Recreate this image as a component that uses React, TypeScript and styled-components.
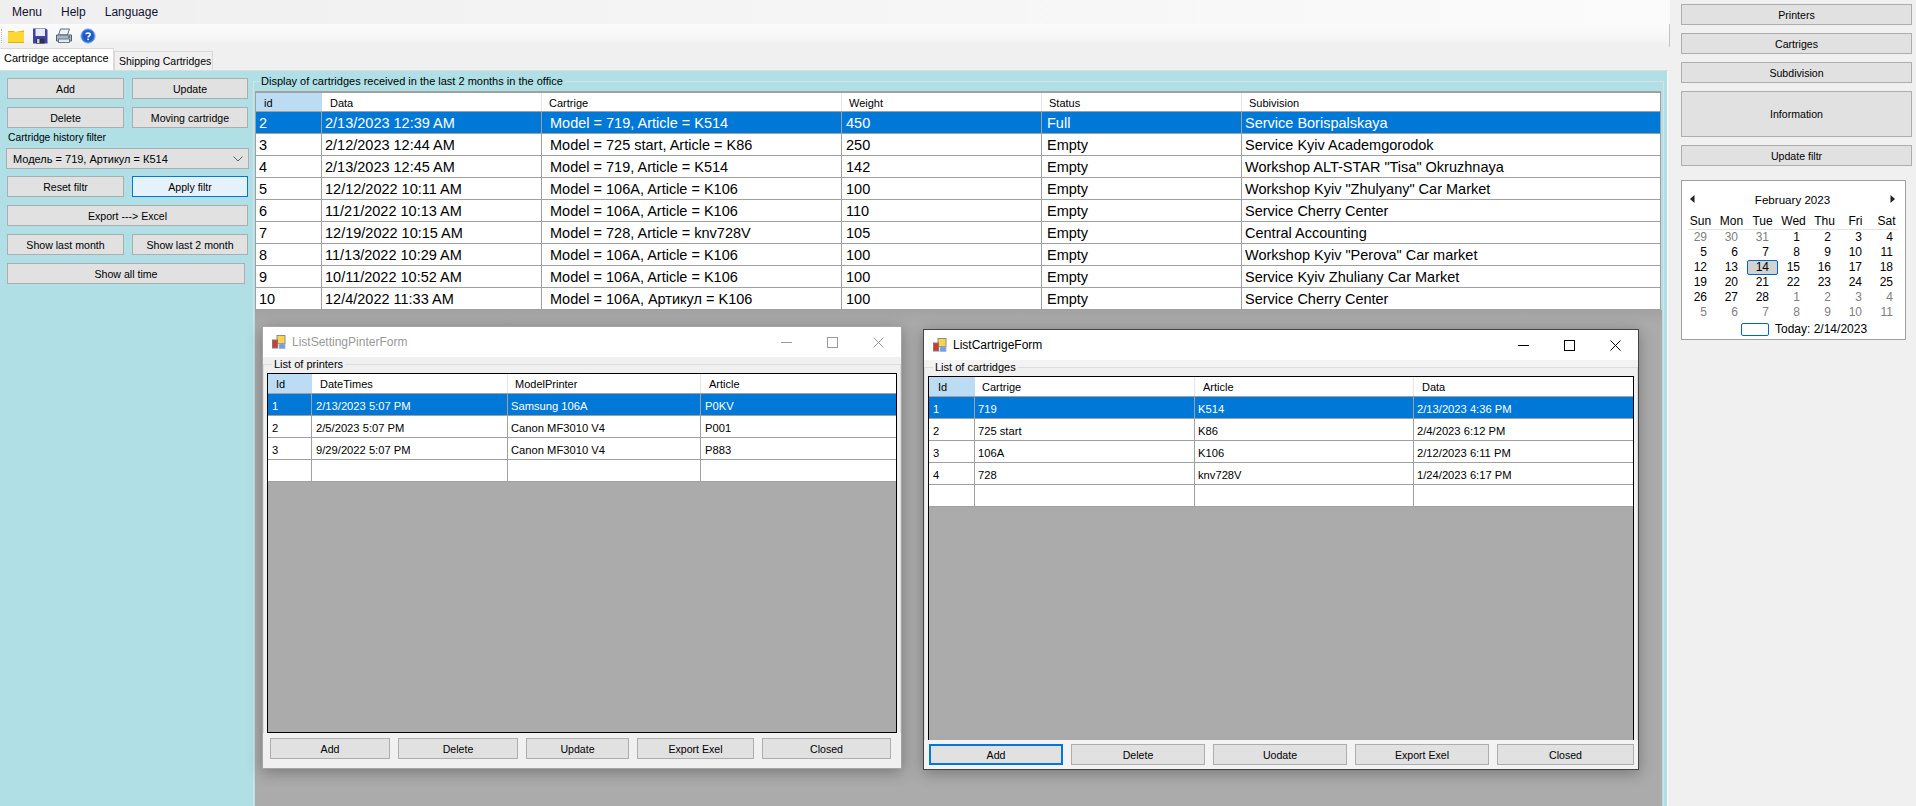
import React from "react";
import styled, { createGlobalStyle } from "styled-components";

const Global = createGlobalStyle`
  html, body { margin: 0; padding: 0; background: #f0f0f0; overflow: hidden; }
  body { font-family: "Liberation Sans", Arial, sans-serif; font-size: 11px; color: #000; }
  * { box-sizing: border-box; }
`;

const Page = styled.div`
  display: flex;
  width: 1916px;
  height: 806px;
  overflow: hidden;
`;
const Main = styled.div`
  width: 1670px;
  display: flex;
  flex-direction: column;
  flex: none;
`;
const MenuBar = styled.nav`
  height: 24px;
  display: flex;
  align-items: center;
  padding: 0 0 0 12px;
  gap: 19px;
  background: linear-gradient(90deg, #efefef 0%, #f5f5f5 50%, #fbfbfb 100%);
  font-size: 12px;
  span { color: #101030; }
`;
const ToolBar = styled.div`
  height: 23px;
  display: flex;
  align-items: center;
  padding-left: 7px;
  gap: 6px;
  background: linear-gradient(180deg, #fbfbfb 0%, #f9f9f9 40%, #efefef 100%);
  border-right: 1px solid #c4c4c4;
  position: relative;
  &::before {
    content: "";
    position: absolute;
    left: 1px;
    top: 5px;
    height: 14px;
    border-left: 1px dotted #b5b5b5;
  }
`;
const ToolIcon = styled.svg`
  width: 18px;
  height: 16px;
  flex: none;
`;
const TabStrip = styled.div`
  height: 24px;
  display: flex;
  align-items: flex-end;
  width: 1668px;
  background: #f0f0f0;
  border-bottom: 1px solid #dcdcdc;
`;
const Tab = styled.div<{ $active?: boolean }>`
  height: ${(p) => (p.$active ? 22 : 19)}px;
  padding: ${(p) => (p.$active ? "0 0 3px 4px" : "0 0 0 4px")};
  width: ${(p) => (p.$active ? 114 : 99)}px;
  display: flex;
  align-items: center;
  background: ${(p) => (p.$active ? "#fff" : "#f0f0f0")};
  border: 1px solid #d9d9d9;
  border-bottom: none;
  border-left: ${(p) => (p.$active ? "none" : "1px solid #d9d9d9")};
  font-size: ${(p) => (p.$active ? 11 : 10.5)}px;
  white-space: nowrap;
`;
const TabPanel = styled.div`
  flex: 1;
  min-height: 0;
  width: 1668px;
  background: #b0e0e6;
  border-right: 1px solid #fff;
  display: flex;
`;
const LeftPane = styled.div`
  width: 253px;
  flex: none;
  padding: 7px 0 0 7px;
  display: flex;
  flex-direction: column;
  gap: 8px;
`;
const Pair = styled.div`
  display: grid;
  grid-template-columns: 117px 116px;
  gap: 8px;
  width: 241px;
`;
const Btn = styled.button<{ $state?: "hot" | "focus" }>`
  height: 21px;
  margin: 0;
  padding: 0;
  font: 10.6px "Liberation Sans", Arial, sans-serif;
  color: #000;
  background: ${(p) => (p.$state === "hot" ? "#e5f1fb" : "#e1e1e1")};
  border: ${(p) => (p.$state === "focus" ? "2px solid #0078d7" : p.$state === "hot" ? "1px solid #0078d7" : "1px solid #adadad")};
`;
const WideBtn = styled(Btn)<{ $w: number }>`
  width: ${(p) => p.$w}px;
`;
const FilterBlock = styled.div`
  display: flex;
  flex-direction: column;
  margin: 0 0 -1px -1px;
`;
const FilterLabel = styled.label`
  height: 20px;
  line-height: 20px;
  padding-left: 2px;
  margin-top: -8px;
  font-size: 10.3px;
`;
const Combo = styled.div`
  width: 243px;
  height: 21px;
  background: #e1e1e1;
  border: 1px solid #adadad;
  display: flex;
  align-items: center;
  justify-content: space-between;
  padding: 0 5px 0 6px;
  font-size: 11px;
  white-space: nowrap;
`;
const Group = styled.fieldset`
  flex: none;
  width: 1411px;
  min-width: 0;
  margin: 3px 0 0;
  padding: 3px 1px 0;
  border: 1px solid #d3e3e6;
  border-bottom: none;
  display: flex;
  flex-direction: column;
  legend {
    font-size: 11px;
    line-height: 14px;
    height: 14px;
    margin-left: 4px;
    padding: 0 2px;
    white-space: nowrap;
  }
`;
const Desktop = styled.div`
  flex: 1;
  position: relative;
  background: linear-gradient(180deg, #a2a2a2 0, #ababab 14px);
`;
const Frame = styled.div<{ $big?: boolean; $open?: boolean }>`
  background: #ababab;
  ${(p) =>
    p.$big
      ? `border: 1px solid #a0a0a0; border-top-width: 2px; border-bottom: none; margin-right: 1px;`
      : `flex: 1; border: 1px solid #000; ${p.$open ? "border-bottom: none;" : ""}`}
`;
const Row = styled.div<{ $cols: string; $h: number; $selected?: boolean }>`
  display: grid;
  grid-template-columns: ${(p) => p.$cols};
  height: ${(p) => p.$h}px;
  border-bottom: 1px solid #a0a0a0;
  background: ${(p) => (p.$selected ? "#0078d7" : "#fff")};
  color: ${(p) => (p.$selected ? "#fff" : "#000")};
`;
const Cell = styled.div<{ $pad: number; $big?: boolean }>`
  padding-left: ${(p) => p.$pad}px;
  padding-top: ${(p) => (p.$big ? 0 : 2)}px;
  border-right: 1px solid #a0a0a0;
  font-size: ${(p) => (p.$big ? 14.5 : 11.2)}px;
  display: flex;
  align-items: center;
  white-space: nowrap;
  overflow: hidden;
  &:last-child { border-right: none; }
`;
const Head = styled.div<{ $corner?: boolean; $pad: number }>`
  padding-left: ${(p) => p.$pad}px;
  padding-top: 1px;
  font-size: 11px;
  display: flex;
  align-items: center;
  background: ${(p) => (p.$corner ? "#bcdcf4" : "#fff")};
  border-right: 1px solid ${(p) => (p.$corner ? "#bcdcf4" : "#e6e6e6")};
  white-space: nowrap;
  &:last-child { border-right: none; }
`;
const Win = styled.section<{ $x: number; $y: number; $w: number; $h: number; $active?: boolean }>`
  position: absolute;
  left: ${(p) => p.$x}px;
  top: ${(p) => p.$y}px;
  width: ${(p) => p.$w}px;
  height: ${(p) => p.$h}px;
  display: flex;
  flex-direction: column;
  background: ${(p) => (p.$active ? "#f3f3f3" : "#f0f0f0")};
  border: 1px solid ${(p) => (p.$active ? "#444" : "#a5a5a5")};
  box-shadow: 0 3px 14px rgba(0, 0, 0, 0.3);
`;
const TitleBar = styled.header<{ $active?: boolean }>`
  height: 30px;
  flex: none;
  background: #fff;
  display: flex;
  align-items: center;
  padding-left: 9px;
  font-size: 12px;
  color: ${(p) => (p.$active ? "#000" : "#999")};
`;
const TitleText = styled.span`
  margin-left: 6px;
  flex: 1;
`;
const Ctl = styled.span`
  width: 46px;
  height: 30px;
  display: flex;
  align-items: center;
  justify-content: center;
`;
const WinGroup = styled.fieldset`
  flex: 1;
  min-height: 0;
  min-width: 0;
  margin: 0;
  padding: 2px 3px 0;
  border: 1px solid #dcdcdc;
  border-bottom: none;
  display: flex;
  flex-direction: column;
  background: #f0f0f0;
  legend {
    font-size: 11px;
    line-height: 14px;
    height: 14px;
    margin-left: 5px;
    padding: 0 2px;
    white-space: nowrap;
  }
`;
const WinButtons = styled.div<{ $cols: string; $inset: number; $top: number; $bottom: number }>`
  display: grid;
  grid-template-columns: ${(p) => p.$cols};
  gap: 8px;
  padding: ${(p) => p.$top}px 0 ${(p) => p.$bottom}px ${(p) => p.$inset}px;
`;
const Side = styled.aside`
  flex: 1;
  padding: 4px 4px 0 11px;
  background: #f0f0f0;
  display: flex;
  flex-direction: column;
  gap: 8px;
`;
const BigBtn = styled(Btn)`
  height: 46px;
`;
const Cal = styled.div`
  width: 225px;
  height: 160px;
  margin-top: 6px;
  background: #fff;
  border: 1px solid #a0a0a0;
  padding: 10px 0 0 3px;
  font-size: 12px;
  display: flex;
  flex-direction: column;
`;
const CalHead = styled.div`
  height: 16px;
  width: 215px;
  display: flex;
  align-items: center;
  justify-content: space-between;
  padding: 0 5px 0 5px;
  margin-bottom: 7px;
  font-size: 11.6px;
`;
const CalNames = styled.div`
  display: grid;
  grid-template-columns: repeat(7, 31px);
  height: 16px;
  position: relative;
  &::after {
    content: "";
    position: absolute;
    left: 3px;
    width: 209px;
    bottom: 0;
    border-bottom: 1px solid #e4e4e4;
  }
  span { text-align: center; line-height: 15px; }
`;
const CalDays = styled.div`
  display: grid;
  grid-template-columns: repeat(7, 31px);
  grid-auto-rows: 15px;
`;
const Day = styled.span<{ $muted?: boolean; $sel?: boolean }>`
  text-align: right;
  padding-right: ${(p) => (p.$sel ? 8 : 9)}px;
  line-height: ${(p) => (p.$sel ? 13 : 15)}px;
  color: ${(p) => (p.$muted ? "#808080" : "#000")};
  ${(p) => (p.$sel ? "background:#d3d3d3;border:1px solid #0066cc;border-radius:2px;" : "")}
`;
const Today = styled.div`
  display: flex;
  align-items: center;
  height: 16px;
  margin-top: 1px;
  padding-left: 56px;
  gap: 6px;
`;
const TodayBox = styled.span`
  width: 28px;
  height: 13px;
  border: 1px solid #0066cc;
  border-radius: 2px;
`;

const Folder = () => (
  <ToolIcon viewBox="0 0 18 16">
    <path d="M1 4 L1 3 L7 3 L8 4 L17 2.5 V4 Z" fill="#e8b400" />
    <path d="M1 4 H17 V15 H1 Z" fill="#fdd835" />
    <path d="M1 14 H17 V15 H1 Z" fill="#e0b010" />
  </ToolIcon>
);
const Floppy = () => (
  <ToolIcon viewBox="0 0 18 16">
    <path d="M2 0.5 H15 L16.5 2 V15.5 H2 Z" fill="#3f42a8" />
    <rect x="4.5" y="1" width="9.5" height="7" fill="#e8eaf6" />
    <rect x="5" y="10.5" width="8.5" height="5" fill="#30304a" />
    <rect x="6" y="11" width="2.5" height="4" fill="#c9c9d6" />
  </ToolIcon>
);
const Printer = () => (
  <ToolIcon viewBox="0 0 18 16">
    <path d="M5.5 1 H14.5 L12.5 7 H3.5 Z" fill="#eef1f5" stroke="#5d6f82" strokeWidth="1" />
    <path d="M1.5 7 H16.5 V13 H1.5 Z" fill="#a9b5c2" stroke="#4e6074" strokeWidth="1" />
    <rect x="3.5" y="11" width="11" height="3.5" fill="#e5e9ee" stroke="#4e6074" strokeWidth="0.8" />
    <rect x="13" y="8.5" width="2" height="1" fill="#34495e" />
  </ToolIcon>
);
const HelpIcon = () => (
  <ToolIcon viewBox="0 0 18 16">
    <circle cx="9" cy="8" r="7.2" fill="#2a6fdb" stroke="#9dbdf0" strokeWidth="1" />
    <circle cx="9" cy="8" r="5.2" fill="#1f57c4" />
    <path d="M6.9 6.3 C7 4.6 11.2 4.4 11.2 6.6 C11.2 8 9.1 8 9.1 9.6" fill="none" stroke="#fff" strokeWidth="1.6" />
    <rect x="8.3" y="10.6" width="1.6" height="1.6" fill="#fff" />
  </ToolIcon>
);
const AppIcon = () => (
  <svg width="14" height="14" viewBox="0 0 14 14">
    <rect x="5" y="0.5" width="8" height="8" fill="#fbd34d" stroke="#8d8d8d" strokeWidth="1" />
    <rect x="0.5" y="5" width="5" height="8" fill="#d8382c" stroke="#7a7a7a" strokeWidth="1" />
    <rect x="7" y="9" width="6" height="4.5" fill="#6f9fe6" stroke="#a0b3cc" strokeWidth="0.8" />
  </svg>
);
const Chevron = () => (
  <svg width="10" height="6" viewBox="0 0 10 6">
    <path d="M0.5 0.5 L5 5 L9.5 0.5" fill="none" stroke="#606060" strokeWidth="1" />
  </svg>
);
const Arrow = ({ dir }: { dir: "l" | "r" }) => (
  <svg width="5" height="8" viewBox="0 0 5 8">
    <path d={dir === "l" ? "M4.5 0 L0 4 L4.5 8 Z" : "M0.5 0 L5 4 L0.5 8 Z"} fill="#222" />
  </svg>
);
const WinControls = ({ color }: { color: string }) => (
  <>
    <Ctl>
      <svg width="11" height="11" viewBox="0 0 11 11"><path d="M0 5.5 H11" stroke={color} strokeWidth="1" /></svg>
    </Ctl>
    <Ctl>
      <svg width="11" height="11" viewBox="0 0 11 11"><rect x="0.5" y="0.5" width="10" height="10" fill="none" stroke={color} strokeWidth="1" /></svg>
    </Ctl>
    <Ctl>
      <svg width="11" height="11" viewBox="0 0 11 11"><path d="M0.5 0.5 L10.5 10.5 M10.5 0.5 L0.5 10.5" stroke={color} strokeWidth="1" /></svg>
    </Ctl>
  </>
);

type Col = { title: string; w: string; headPad: number; pad: number };

const Grid = ({
  cols,
  rows,
  big,
  open,
  headH,
  rowH,
}: {
  cols: Col[];
  rows: string[][];
  big?: boolean;
  open?: boolean;
  headH: number;
  rowH: number;
}) => {
  const template = cols.map((c) => c.w).join(" ");
  return (
    <Frame $big={big} $open={open}>
      <Row $cols={template} $h={headH}>
        {cols.map((c, i) => (
          <Head key={c.title} $corner={i === 0} $pad={c.headPad}>{c.title}</Head>
        ))}
      </Row>
      {rows.map((r, ri) => (
        <Row key={ri} $cols={template} $h={rowH} $selected={ri === 0}>
          {r.map((v, ci) => (
            <Cell key={ci} $pad={cols[ci].pad} $big={big}>{v}</Cell>
          ))}
        </Row>
      ))}
    </Frame>
  );
};

const mainCols: Col[] = [
  { title: "id", w: "66px", headPad: 8, pad: 3 },
  { title: "Data", w: "220px", headPad: 8, pad: 3 },
  { title: "Cartrige", w: "300px", headPad: 7, pad: 8 },
  { title: "Weight", w: "200px", headPad: 7, pad: 4 },
  { title: "Status", w: "200px", headPad: 7, pad: 5 },
  { title: "Subivision", w: "1fr", headPad: 7, pad: 3 },
];
const mainRows = [
  ["2", "2/13/2023 12:39 AM", "Model = 719, Article = K514", "450", "Full", "Service Borispalskaya"],
  ["3", "2/12/2023 12:44 AM", "Model = 725 start, Article = K86", "250", "Empty", "Service Kyiv Academgorodok"],
  ["4", "2/13/2023 12:45 AM", "Model = 719, Article = K514", "142", "Empty", 'Workshop ALT-STAR "Tisa" Okruzhnaya'],
  ["5", "12/12/2022 10:11 AM", "Model = 106A, Article = K106", "100", "Empty", 'Workshop Kyiv "Zhulyany" Car Market'],
  ["6", "11/21/2022 10:13 AM", "Model = 106A, Article = K106", "110", "Empty", "Service Cherry Center"],
  ["7", "12/19/2022 10:15 AM", "Model = 728, Article = knv728V", "105", "Empty", "Central Accounting"],
  ["8", "11/13/2022 10:29 AM", "Model = 106A, Article = K106", "100", "Empty", 'Workshop Kyiv "Perova" Car market'],
  ["9", "10/11/2022 10:52 AM", "Model = 106A, Article = K106", "100", "Empty", "Service Kyiv Zhuliany Car Market"],
  ["10", "12/4/2022 11:33 AM", "Model = 106A, Артикул = K106", "100", "Empty", "Service Cherry Center"],
];
const printerCols: Col[] = [
  { title: "Id", w: "44px", headPad: 8, pad: 4 },
  { title: "DateTimes", w: "196px", headPad: 8, pad: 4 },
  { title: "ModelPrinter", w: "193px", headPad: 7, pad: 3 },
  { title: "Article", w: "1fr", headPad: 8, pad: 4 },
];
const printerRows = [
  ["1", "2/13/2023 5:07 PM", "Samsung 106A", "P0KV"],
  ["2", "2/5/2023 5:07 PM", "Canon MF3010 V4", "P001"],
  ["3", "9/29/2022 5:07 PM", "Canon MF3010 V4", "P883"],
  ["", "", "", ""],
];
const cartCols: Col[] = [
  { title: "Id", w: "46px", headPad: 9, pad: 4 },
  { title: "Cartrige", w: "220px", headPad: 7, pad: 3 },
  { title: "Article", w: "219px", headPad: 8, pad: 3 },
  { title: "Data", w: "1fr", headPad: 8, pad: 3 },
];
const cartRows = [
  ["1", "719", "K514", "2/13/2023 4:36 PM"],
  ["2", "725 start", "K86", "2/4/2023 6:12 PM"],
  ["3", "106A", "K106", "2/12/2023 6:11 PM"],
  ["4", "728", "knv728V", "1/24/2023 6:17 PM"],
  ["", "", "", ""],
];

const dayNames = ["Sun", "Mon", "Tue", "Wed", "Thu", "Fri", "Sat"];
const days: { n: number; m?: boolean }[] = [
  ...[29, 30, 31].map((n) => ({ n, m: true })),
  ...Array.from({ length: 28 }, (_, i) => ({ n: i + 1 })),
  ...[1, 2, 3, 4, 5, 6, 7, 8, 9, 10, 11].map((n) => ({ n, m: true })),
];

export default function App() {
  return (
    <Page>
      <Global />
      <Main>
        <MenuBar>
          <span>Menu</span>
          <span>Help</span>
          <span>Language</span>
        </MenuBar>
        <ToolBar>
          <Folder />
          <Floppy />
          <Printer />
          <HelpIcon />
        </ToolBar>
        <TabStrip>
          <Tab $active>Cartridge acceptance</Tab>
          <Tab>Shipping Cartridges</Tab>
        </TabStrip>
        <TabPanel>
          <LeftPane>
            <Pair>
              <Btn>Add</Btn>
              <Btn>Update</Btn>
            </Pair>
            <Pair>
              <Btn>Delete</Btn>
              <Btn>Moving cartridge</Btn>
            </Pair>
            <FilterBlock>
              <FilterLabel>Cartridge history filter</FilterLabel>
              <Combo>
                Модель = 719, Артикул = К514
                <Chevron />
              </Combo>
            </FilterBlock>
            <Pair>
              <Btn>Reset filtr</Btn>
              <Btn $state="hot">Apply filtr</Btn>
            </Pair>
            <WideBtn $w={241}>Export ---&gt; Excel</WideBtn>
            <Pair>
              <Btn>Show last month</Btn>
              <Btn>Show last 2 month</Btn>
            </Pair>
            <WideBtn $w={238}>Show all time</WideBtn>
          </LeftPane>
          <Group>
            <legend>Display of cartridges received in the last 2 months in the office</legend>
            <Grid big cols={mainCols} rows={mainRows} headH={19} rowH={22} />
            <Desktop>
              <Win $x={7} $y={16} $w={640} $h={443}>
                <TitleBar>
                  <AppIcon />
                  <TitleText>ListSettingPinterForm</TitleText>
                  <WinControls color="#9a9a9a" />
                </TitleBar>
                <WinGroup>
                  <legend>List of printers</legend>
                  <Grid cols={printerCols} rows={printerRows} headH={20} rowH={22} />
                </WinGroup>
                <WinButtons $cols="120px 120px 103px 117px 129px" $inset={7} $top={5} $bottom={9}>
                  <Btn>Add</Btn>
                  <Btn>Delete</Btn>
                  <Btn>Update</Btn>
                  <Btn>Export Exel</Btn>
                  <Btn>Closed</Btn>
                </WinButtons>
              </Win>
              <Win $x={668} $y={19} $w={716} $h={441} $active>
                <TitleBar $active>
                  <AppIcon />
                  <TitleText>ListCartrigeForm</TitleText>
                  <WinControls color="#000" />
                </TitleBar>
                <WinGroup>
                  <legend>List of cartridges</legend>
                  <Grid open cols={cartCols} rows={cartRows} headH={20} rowH={22} />
                </WinGroup>
                <WinButtons $cols="134px 134px 134px 134px 137px" $inset={5} $top={4} $bottom={4}>
                  <Btn $state="focus">Add</Btn>
                  <Btn>Delete</Btn>
                  <Btn>Uodate</Btn>
                  <Btn>Export Exel</Btn>
                  <Btn>Closed</Btn>
                </WinButtons>
              </Win>
            </Desktop>
          </Group>
        </TabPanel>
      </Main>
      <Side>
        <Btn>Printers</Btn>
        <Btn>Cartriges</Btn>
        <Btn>Subdivision</Btn>
        <BigBtn>Information</BigBtn>
        <Btn>Update filtr</Btn>
        <Cal>
          <CalHead>
            <Arrow dir="l" />
            <span>February 2023</span>
            <Arrow dir="r" />
          </CalHead>
          <CalNames>
            {dayNames.map((d) => (
              <span key={d}>{d}</span>
            ))}
          </CalNames>
          <CalDays>
            {days.map((d, i) => (
              <Day key={i} $muted={d.m} $sel={!d.m && d.n === 14}>{d.n}</Day>
            ))}
          </CalDays>
          <Today>
            <TodayBox />
            <span>Today: 2/14/2023</span>
          </Today>
        </Cal>
      </Side>
    </Page>
  );
}
